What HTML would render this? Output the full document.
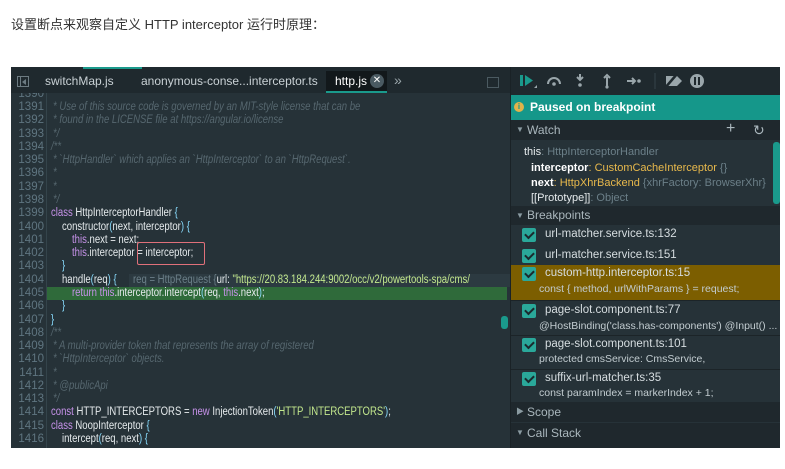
<!DOCTYPE html>
<html><head><meta charset="utf-8"><style>
*{margin:0;padding:0;box-sizing:border-box}
body{width:785px;height:469px;background:#fff;position:relative;overflow:hidden;font-family:"Liberation Sans","Noto Sans CJK SC",sans-serif}
.a{position:absolute;white-space:nowrap}
#p{position:absolute;left:11px;top:67px;width:769px;height:381px;background:#263238;overflow:hidden}
.ln{position:absolute;left:0;width:33px;text-align:right;color:#5f7580;font-size:11.5px;line-height:13px}
.cd{position:absolute;font-size:11.5px;line-height:13px;color:#e6ebed;white-space:nowrap;transform:scaleX(0.83);transform-origin:0 0}
.c{color:#56676f;font-style:italic}
.k{color:#c792ea}
.s{color:#c3e88d}
.b{color:#89ddff}
.d{color:#6b7f88}
.r{position:absolute;left:500px;width:269px;background:#263238}
.hd{position:absolute;left:500px;width:269px;background:#1f282d;color:#aab7bd;font-size:12px;padding-left:16px;line-height:19px}
.hd i{position:absolute;left:5px;font-style:normal;font-size:8px;color:#8a9aa1}
.cb{position:absolute;left:511px;width:14px;height:14px;background:#2aa89a;border-radius:2px}
.cb:after{content:"";position:absolute;left:3px;top:3px;width:7px;height:4px;border-left:2px solid #1b2a2e;border-bottom:2px solid #1b2a2e;transform:rotate(-45deg)}
.bt{position:absolute;left:534px;font-size:11.5px;color:#d6dde0;white-space:nowrap}
.bs{position:absolute;left:528px;font-size:10.5px;color:#c2ccd0;white-space:nowrap}
.sep{position:absolute;left:500px;width:269px;height:1px;background:#1c2428}
</style></head><body>
<div class="a" style="left:11px;top:14px;font-size:13px;color:#333">设置断点来观察自定义 HTTP interceptor 运行时原理：</div>
<div id="p">
<div style="position:absolute;left:36px;top:220px;width:460px;height:13px;background:#2f6a3a"></div>
<div style="position:absolute;left:35px;top:26px;width:1px;height:355px;background:#34444b"></div>

<div class="ln" style="top:21px">1390</div>
<div class="ln" style="top:34px">1391</div><div class="cd c" style="left:42px;top:34px">* Use of this source code is governed by an MIT-style license that can be</div>
<div class="ln" style="top:47.3px">1392</div><div class="cd c" style="left:42px;top:47.3px">* found in the LICENSE file at https://angular.io/license</div>
<div class="ln" style="top:60.6px">1393</div><div class="cd c" style="left:42px;top:60.6px">*/</div>
<div class="ln" style="top:73.8px">1394</div><div class="cd c" style="left:40px;top:73.8px">/**</div>
<div class="ln" style="top:87.1px">1395</div><div class="cd c" style="left:42px;top:87.1px">* `HttpHandler` which applies an `HttpInterceptor` to an `HttpRequest`.</div>
<div class="ln" style="top:100.4px">1396</div><div class="cd c" style="left:42px;top:100.4px">*</div>
<div class="ln" style="top:113.7px">1397</div><div class="cd c" style="left:42px;top:113.7px">*</div>
<div class="ln" style="top:127px">1398</div><div class="cd c" style="left:42px;top:127px">*/</div>
<div class="ln" style="top:140.2px">1399</div><div class="cd" style="left:40px;top:140.2px"><span class="k">class</span> HttpInterceptorHandler <span class="b">{</span></div>
<div class="ln" style="top:153.5px">1400</div><div class="cd" style="left:51px;top:153.5px">constructor<span class="b">(</span>next, interceptor<span class="b">)</span> <span class="b">{</span></div>
<div class="ln" style="top:166.8px">1401</div><div class="cd" style="left:61px;top:166.8px"><span class="k">this</span>.next = next;</div>
<div class="ln" style="top:180.1px">1402</div><div class="cd" style="left:61px;top:180.1px"><span class="k">this</span>.interceptor = interceptor;</div>
<div class="ln" style="top:193.4px">1403</div><div class="cd" style="left:51px;top:193.4px"><span class="b">}</span></div>
<div class="ln" style="top:206.6px">1404</div><div class="cd" style="left:51px;top:206.6px">handle<span class="b">(</span>req<span class="b">)</span> <span class="b">{</span></div>
<div style="position:absolute;left:118px;top:207px;width:381px;height:13px;background:#2c3a41"></div>
<div class="cd" style="left:122px;top:206.6px"><span class="d">req = HttpRequest {</span>url: <span class="s">"https://20.83.184.244:9002/occ/v2/powertools-spa/cms/</span></div>
<div class="ln" style="top:219.9px">1405</div><div class="cd" style="left:61px;top:219.9px"><span class="k">return</span> <span class="k">this</span>.interceptor.intercept<span class="b">(</span>req, <span class="k">this</span>.next<span class="b">)</span>;</div>
<div class="ln" style="top:233.2px">1406</div><div class="cd" style="left:51px;top:233.2px"><span class="b">}</span></div>
<div class="ln" style="top:246.5px">1407</div><div class="cd" style="left:40px;top:246.5px"><span class="b">}</span></div>
<div class="ln" style="top:259.8px">1408</div><div class="cd c" style="left:40px;top:259.8px">/**</div>
<div class="ln" style="top:273px">1409</div><div class="cd c" style="left:42px;top:273px">* A multi-provider token that represents the array of registered</div>
<div class="ln" style="top:286.3px">1410</div><div class="cd c" style="left:42px;top:286.3px">* `HttpInterceptor` objects.</div>
<div class="ln" style="top:299.6px">1411</div><div class="cd c" style="left:42px;top:299.6px">*</div>
<div class="ln" style="top:312.9px">1412</div><div class="cd c" style="left:42px;top:312.9px">* @publicApi</div>
<div class="ln" style="top:326.2px">1413</div><div class="cd c" style="left:42px;top:326.2px">*/</div>
<div class="ln" style="top:339.4px">1414</div><div class="cd" style="left:40px;top:339.4px"><span class="k">const</span> HTTP_INTERCEPTORS = <span class="k">new</span> InjectionToken<span class="b">(</span><span class="s">'HTTP_INTERCEPTORS'</span><span class="b">)</span>;</div>
<div class="ln" style="top:352.7px">1415</div><div class="cd" style="left:40px;top:352.7px"><span class="k">class</span> NoopInterceptor <span class="b">{</span></div>
<div class="ln" style="top:366px">1416</div><div class="cd" style="left:51px;top:366px">intercept<span class="b">(</span>req, next<span class="b">)</span> <span class="b">{</span></div>

<div style="position:absolute;left:126px;top:175px;width:68px;height:23px;border:1.5px solid #e0707a;border-radius:2px"></div>
<div style="position:absolute;left:490px;top:249px;width:7px;height:13px;background:#1a9a8c;border-radius:3px"></div>

<!-- tab bar -->
<div style="position:absolute;left:0;top:0;width:499px;height:26px;background:#1f292e"></div>
<div style="position:absolute;left:72px;top:0;width:59px;height:2px;background:#1a9a8c"></div>
<div style="position:absolute;left:6px;top:9px;width:12px;height:11px;border:1px solid #6c7b82"><div style="position:absolute;left:2px;top:0;width:1px;height:9px;background:#6c7b82"></div><div style="position:absolute;left:4px;top:2px;border:3px solid transparent;border-right:4px solid #6c7b82;border-left:0"></div></div>
<div class="a" style="left:34px;top:7px;font-size:12px;color:#c9d1d5">switchMap.js</div>
<div class="a" style="left:130px;top:7px;font-size:12px;color:#c9d1d5">anonymous-conse...interceptor.ts</div>
<div style="position:absolute;left:315px;top:4px;width:61px;height:22px;background:#12181b;border-bottom:2px solid #1a9a8c"></div>
<div class="a" style="left:324px;top:7px;font-size:12px;color:#fff">http.js</div>
<div style="position:absolute;left:359px;top:7px;width:14px;height:14px;border-radius:50%;background:#4a5a62;color:#fff;font-size:10px;text-align:center;line-height:14px">✕</div>
<div class="a" style="left:383px;top:5px;font-size:14px;color:#9aa6ab">»</div>
<div style="position:absolute;left:476px;top:10px;width:12px;height:11px;border:1px solid #4b5a61"></div>
<div style="position:absolute;left:499px;top:0;width:1px;height:381px;background:#1a2226"></div>

<!-- right panel -->
<div class="r" style="top:0;height:28px;background:#1f292e"></div>
<svg style="position:absolute;left:500px;top:0" width="269" height="28">
<rect x="9" y="8" width="3" height="11" fill="#1a9a8c"/><path d="M14 8 L22 13.5 L14 19Z" fill="#1a9a8c"/><path d="M23 21 l3 0 l0 -3z" fill="#9aa6ab"/>
<path d="M37 17 a6 6 0 0 1 12 0" fill="none" stroke="#9aa6ab" stroke-width="2"/><circle cx="43" cy="17" r="1.8" fill="#9aa6ab"/>
<path d="M69 7 v6 M66 10 l3 3 l3 -3" fill="none" stroke="#9aa6ab" stroke-width="2"/><circle cx="69" cy="18" r="1.8" fill="#9aa6ab"/>
<path d="M96 19 v-9 M93 11 l3 -3 l3 3" fill="none" stroke="#9aa6ab" stroke-width="2"/><circle cx="96" cy="20" r="1.6" fill="#9aa6ab"/>
<path d="M116 14 h8 M121 11 l3 3 l-3 3" fill="none" stroke="#9aa6ab" stroke-width="2"/><circle cx="128" cy="14" r="1.8" fill="#9aa6ab"/>
<line x1="144" y1="6" x2="144" y2="22" stroke="#34444b"/>
<path d="M155 9 h11 l5 5 l-5 5 h-11z" fill="#9aa6ab"/><line x1="154" y1="21" x2="166" y2="7" stroke="#1f292e" stroke-width="2.5"/>
<circle cx="186" cy="14" r="7" fill="#9aa6ab"/><rect x="183" y="10" width="2" height="8" fill="#1f292e"/><rect x="187" y="10" width="2" height="8" fill="#1f292e"/>
</svg>
<div class="r" style="top:28px;height:25px;background:#15978a;color:#fff;font-size:12px;font-weight:bold;line-height:25px;padding-left:19px">Paused on breakpoint</div>
<div style="position:absolute;left:503px;top:35px;width:10px;height:10px;border-radius:50%;background:#e2b34a;color:#15978a;font-size:8px;text-align:center;line-height:10px;font-weight:bold">i</div>
<div class="hd" style="top:53px;height:20px;line-height:20px"><i>▼</i>Watch<span style="position:absolute;left:215px;font-size:16px;top:-1px">+</span><span style="position:absolute;left:242px;font-size:14px">↻</span></div>
<div class="a" style="left:513px;top:79px;font-size:11px;color:#e6ebed">this<span class="d">: HttpInterceptorHandler</span></div>
<div class="a" style="left:520px;top:95px;font-size:11px;color:#fff;font-weight:bold">interceptor<span style="font-weight:normal;color:#e8b94c">: CustomCacheInterceptor</span><span style="font-weight:normal" class="d"> {}</span></div>
<div class="a" style="left:520px;top:110px;font-size:11px;color:#fff;font-weight:bold">next<span style="font-weight:normal;color:#e8b94c">: HttpXhrBackend</span><span style="font-weight:normal" class="d"> {xhrFactory: BrowserXhr}</span></div>
<div class="a" style="left:520px;top:125px;font-size:11px;color:#e6ebed">[[Prototype]]<span class="d">: Object</span></div>
<div style="position:absolute;left:762px;top:75px;width:7px;height:62px;background:#1a9a8c;border-radius:3px"></div>
<div class="hd" style="top:139px"><i>▼</i>Breakpoints</div>
<div style="position:absolute;left:500px;top:198px;width:269px;height:35px;background:#7c5e00"></div>

<div class="cb" style="top:161px"></div><div class="bt" style="top:161px">url-matcher.service.ts:132</div>
<div class="cb" style="top:182px"></div><div class="bt" style="top:182px">url-matcher.service.ts:151</div>
<div class="cb" style="top:200px"></div><div class="bt" style="top:200px">custom-http.interceptor.ts:15</div>
<div class="bs" style="top:216px">const { method, urlWithParams } = request;</div>
<div class="sep" style="top:233px"></div>
<div class="cb" style="top:237px"></div><div class="bt" style="top:237px">page-slot.component.ts:77</div>
<div class="bs" style="top:253px">@HostBinding('class.has-components') @Input() ...</div>
<div class="sep" style="top:268px"></div>
<div class="cb" style="top:271px"></div><div class="bt" style="top:271px">page-slot.component.ts:101</div>
<div class="bs" style="top:286px">protected cmsService: CmsService,</div>
<div class="sep" style="top:302px"></div>
<div class="cb" style="top:305px"></div><div class="bt" style="top:305px">suffix-url-matcher.ts:35</div>
<div class="bs" style="top:320px">const paramIndex = markerIndex + 1;</div>

<div class="hd" style="top:335px;height:20px;line-height:20px"><i>▶</i>Scope</div>
<div class="hd" style="top:356px;height:20px;line-height:20px"><i>▼</i>Call Stack</div>
<div class="r" style="top:376px;height:5px;background:#1f282d"></div>
</div>
</body></html>
